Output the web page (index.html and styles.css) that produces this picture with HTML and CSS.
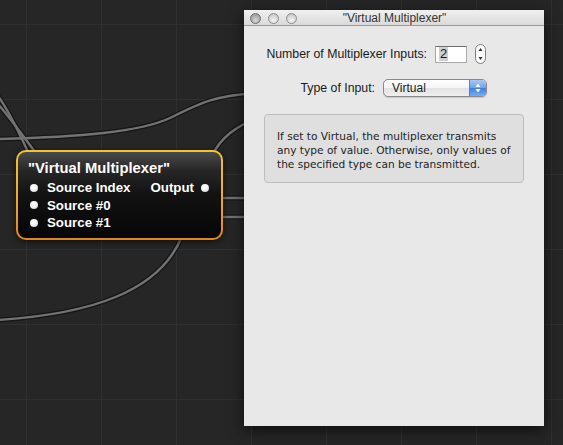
FILE: index.html
```html
<!DOCTYPE html>
<html>
<head>
<meta charset="utf-8">
<link rel="stylesheet" href="styles.css">
</head>
<body>
<div class="canvas">
  <svg class="wires" width="563" height="445" viewBox="0 0 563 445">
    <g class="wire-shadow">
      <path d="M-2,139 C80,137 140,132 170,118 C200,103 215,95 260,93"/>
      <path d="M-2,96 C10,112 20,135 30,156"/>
      <path d="M-2,104 C12,120 26,140 38,156"/>
      <path d="M260,118 C238,124 220,138 212,156"/>
      <path d="M215,198 L260,198"/>
      <path d="M215,217 L260,217"/>
      <path d="M-2,320 C90,314 160,292 182,236"/>
    </g>
    <g class="wire">
      <path d="M-2,139 C80,137 140,132 170,118 C200,103 215,95 260,93"/>
      <path d="M-2,96 C10,112 20,135 30,156"/>
      <path d="M-2,104 C12,120 26,140 38,156"/>
      <path d="M260,118 C238,124 220,138 212,156"/>
      <path d="M215,198 L260,198"/>
      <path d="M215,217 L260,217"/>
      <path d="M-2,320 C90,314 160,292 182,236"/>
    </g>
  </svg>

  <div class="node">
    <div class="node-inner">
      <div class="node-title">"Virtual Multiplexer"</div>
      <div class="node-row">
        <span class="port-in"><span class="dot"></span>Source Index</span>
        <span class="port-out">Output<span class="dot"></span></span>
      </div>
      <div class="node-row">
        <span class="port-in"><span class="dot"></span>Source #0</span>
      </div>
      <div class="node-row">
        <span class="port-in"><span class="dot"></span>Source #1</span>
      </div>
    </div>
  </div>

  <div class="window">
    <div class="titlebar">
      <div class="lights">
        <span class="light light-close"></span>
        <span class="light"></span>
        <span class="light"></span>
      </div>
      <div class="title">"Virtual Multiplexer"</div>
    </div>
    <div class="content">
      <div class="form-row row-inputs">
        <span class="label">Number of Multiplexer Inputs:</span>
        <span class="textfield"><span class="sel">2</span></span>
        <span class="stepper">
          <svg width="11" height="20" viewBox="0 0 11 20">
            <rect x="0.5" y="0.5" width="10" height="19" rx="5" ry="5" fill="#fbfbfb" stroke="#7d7d7d"/>
            <path d="M3.5,7 L5.5,4 L7.5,7 Z" fill="#333"/>
            <path d="M3.5,13 L5.5,16 L7.5,13 Z" fill="#333"/>
          </svg>
        </span>
      </div>
      <div class="form-row row-type">
        <span class="label">Type of Input:</span>
        <span class="popup">
          <span class="popup-text">Virtual</span>
          <span class="popup-arrows">
            <svg width="8" height="12" viewBox="0 0 8 12">
              <path d="M1.5,5 L4,1.5 L6.5,5 Z" fill="#fff"/>
              <path d="M1.5,7 L4,10.5 L6.5,7 Z" fill="#fff"/>
            </svg>
          </span>
        </span>
      </div>
      <div class="info">If set to Virtual, the multiplexer transmits<br>any type of value. Otherwise, only values of<br>the specified type can be transmitted.</div>
    </div>
  </div>
</div>
</body>
</html>
```

FILE: styles.css
```css
html, body {
  margin: 0;
  padding: 0;
  background: #262626;
}

.canvas {
  position: relative;
  width: 563px;
  height: 445px;
  overflow: hidden;
  background-color: #262626;
  background-image:
    linear-gradient(to right, #303030 1px, transparent 1px),
    linear-gradient(to bottom, #303030 1px, transparent 1px);
  background-size: 75px 75px;
  background-position: 26px 24px;
}

.wires {
  position: absolute;
  left: 0;
  top: 0;
}

.wire-shadow path {
  fill: none;
  stroke: #161616;
  stroke-width: 5;
}

.wire path {
  fill: none;
  stroke: #727272;
  stroke-width: 2.4;
}

/* Patch node */
.node {
  position: absolute;
  left: 16px;
  top: 150px;
  width: 207px;
  height: 90px;
  box-sizing: border-box;
  padding: 2px;
  border-radius: 10px;
  background: linear-gradient(to bottom, #f4c52e 0%, #f0a827 55%, #e2831c 100%);
  box-shadow: 0 2px 6px rgba(0, 0, 0, 0.6);
}

.node-inner {
  height: 100%;
  box-sizing: border-box;
  border-radius: 8px;
  background: linear-gradient(to bottom, #4a4a4a 0%, #262626 22%, #121212 50%, #060606 100%);
  padding: 8px 12px 0 10px;
  display: flex;
  flex-direction: column;
  font-family: "Liberation Sans", Arial, sans-serif;
  font-weight: bold;
  color: #ffffff;
}

.node-title {
  font-size: 14.8px;
  line-height: 16px;
  margin-bottom: 3px;
}

.node-row {
  display: flex;
  justify-content: space-between;
  align-items: center;
  font-size: 13.3px;
  height: 17.5px;
  padding-left: 2px;
}

.port-in, .port-out {
  display: flex;
  align-items: center;
}

.port-in .dot {
  margin-right: 9px;
}

.port-out .dot {
  margin-left: 7px;
}

.dot {
  display: inline-block;
  width: 8px;
  height: 8px;
  border-radius: 50%;
  background: radial-gradient(circle at 40% 35%, #ffffff 0%, #f2f2f2 50%, #bdbdbd 100%);
}

/* Inspector window */
.window {
  position: absolute;
  left: 244px;
  top: 10px;
  width: 300px;
  height: 416px;
  background: #e8e8e8;
  box-shadow: 0 4px 14px rgba(0, 0, 0, 0.65);
  display: flex;
  flex-direction: column;
  font-family: "Liberation Sans", Arial, sans-serif;
  color: #1a1a1a;
}

.titlebar {
  height: 16px;
  flex: none;
  box-sizing: border-box;
  border-bottom: 1px solid #9a9a9a;
  background: linear-gradient(to bottom, #f0f0f0 0%, #dadada 100%);
  display: flex;
  align-items: center;
  position: relative;
}

.lights {
  display: flex;
  gap: 7px;
  padding-left: 6px;
  padding-top: 1px;
}

.light {
  width: 11px;
  height: 11px;
  box-sizing: border-box;
  border-radius: 50%;
  border: 1px solid #8c8c8c;
  background: radial-gradient(circle at 50% 70%, #f4f4f4 0%, #d4d4d4 60%, #b8b8b8 100%);
}

.light-close {
  background: radial-gradient(circle at 50% 70%, #d6d6d6 0%, #a9a9a9 60%, #8f8f8f 100%);
  border-color: #6e6e6e;
}

.title {
  flex: 1;
  text-align: center;
  font-size: 12px;
  color: #333333;
  margin-left: -52px;
  padding-top: 1px;
}

.content {
  display: flex;
  flex-direction: column;
  padding: 18px 20px 0 20px;
}

.form-row {
  display: flex;
  justify-content: flex-end;
  align-items: center;
  font-size: 12.3px;
  padding-right: 37px;
}

.row-inputs {
  height: 20px;
}

.row-type {
  height: 18px;
  margin-top: 15px;
}

.label {
  margin-right: 8px;
}

.textfield {
  width: 32px;
  height: 17px;
  box-sizing: border-box;
  background: #ffffff;
  border: 1px solid #a8a8a8;
  border-top-color: #6f6f6f;
  display: flex;
  align-items: center;
  padding-left: 3px;
  margin-right: 8px;
  font-size: 13px;
}

.sel {
  background: #cfcfcf;
  line-height: 14px;
  padding: 0 1px;
}

.stepper {
  display: flex;
  width: 11px;
  height: 20px;
  margin-right: 1px;
}

.popup {
  width: 104px;
  height: 18px;
  box-sizing: border-box;
  border: 1px solid #8a8a8a;
  border-radius: 5px;
  background: linear-gradient(to bottom, #ffffff 0%, #f4f4f4 50%, #e2e2e2 51%, #efefef 100%);
  display: flex;
  overflow: hidden;
  box-shadow: 0 1px 1px rgba(0, 0, 0, 0.15);
}

.popup-text {
  flex: 1;
  padding-left: 8px;
  line-height: 16px;
  font-size: 12px;
}

.popup-arrows {
  width: 16px;
  display: flex;
  align-items: center;
  justify-content: center;
  border-left: 1px solid #5a7fb8;
  background: linear-gradient(to bottom, #a9c9f5 0%, #6ea2ea 50%, #3f7fe0 51%, #75adf3 100%);
}

.info {
  margin-top: 17px;
  height: 69px;
  box-sizing: border-box;
  border: 1px solid #bdbdbd;
  border-radius: 4px;
  background: #dfdfdf;
  padding: 14px 12px 0 12px;
  font-family: "DejaVu Sans", Verdana, sans-serif;
  font-size: 10.6px;
  line-height: 14px;
  color: #1e1e1e;
}
```
